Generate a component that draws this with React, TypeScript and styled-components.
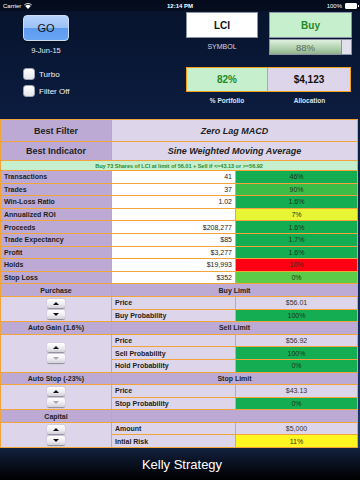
import React from 'react';
import styled, { createGlobalStyle } from 'styled-components';

const GlobalStyle = createGlobalStyle`
  html, body { margin: 0; padding: 0; }
  body { font-family: "Liberation Sans", Arial, sans-serif; background: #000; }
`;

const ORANGE = '#f2a33a';
const PURPLE = '#bcaad4';
const LAVENDER = '#ddd6ea';
const WHITE = '#ffffff';
const LIGHT_GREEN = '#c6efce';

type Tone = 'green' | 'lime' | 'yellowGreen' | 'red' | 'soft' | 'yellow';

const toneColors: Record<Tone, string> = {
  green: '#14ad52',
  lime: '#3cbd48',
  yellowGreen: '#e7f534',
  red: '#ff0012',
  soft: '#5bcb48',
  yellow: '#fff521',
};

interface Stat {
  label: string;
  value: string;
  pct: string;
  tone: Tone;
}

const stats: Stat[] = [
  { label: 'Transactions', value: '41', pct: '46%', tone: 'green' },
  { label: 'Trades', value: '37', pct: '90%', tone: 'lime' },
  { label: 'Win-Loss Ratio', value: '1.02', pct: '1.6%', tone: 'green' },
  { label: 'Annualized ROI', value: '', pct: '7%', tone: 'yellowGreen' },
  { label: 'Proceeds', value: '$208,277', pct: '1.6%', tone: 'green' },
  { label: 'Trade Expectancy', value: '$85', pct: '1.7%', tone: 'green' },
  { label: 'Profit', value: '$3,277', pct: '1.6%', tone: 'green' },
  { label: 'Holds', value: '$19,993', pct: '10%', tone: 'red' },
  { label: 'Stop Loss', value: '$352', pct: '0%', tone: 'soft' },
];

interface SubRow {
  label: string;
  value: string;
  tone?: Tone;
}

interface Section {
  title: string;
  limit: string;
  downEnabled: boolean;
  rows: SubRow[];
}

const sections: Section[] = [
  {
    title: 'Purchase',
    limit: 'Buy Limit',
    downEnabled: true,
    rows: [
      { label: 'Price', value: '$56.01' },
      { label: 'Buy Probability', value: '100%', tone: 'green' },
    ],
  },
  {
    title: 'Auto Gain (1.6%)',
    limit: 'Sell Limit',
    downEnabled: false,
    rows: [
      { label: 'Price', value: '$56.92' },
      { label: 'Sell Probability', value: '100%', tone: 'green' },
      { label: 'Hold Probability', value: '0%', tone: 'green' },
    ],
  },
  {
    title: 'Auto Stop (-23%)',
    limit: 'Stop Limit',
    downEnabled: false,
    rows: [
      { label: 'Price', value: '$43.13' },
      { label: 'Stop Probability', value: '0%', tone: 'green' },
    ],
  },
  {
    title: 'Capital',
    limit: '',
    downEnabled: true,
    rows: [
      { label: 'Amount', value: '$5,000' },
      { label: 'Intial Risk', value: '11%', tone: 'yellow' },
    ],
  },
];

const App = () => (
  <>
    <GlobalStyle />
    <Screen>
      <StatusBar>
        <Carrier>
          Carrier
          <svg width="8" height="6" viewBox="0 0 8 6">
            <path d="M4 6 L1.2 3 A4 4 0 0 1 6.8 3 Z" fill="#fff" />
            <path d="M0.2 2 A5.5 5.5 0 0 1 7.8 2" stroke="#fff" strokeWidth="0.8" fill="none" />
          </svg>
        </Carrier>
        <Clock>12:14 PM</Clock>
        <Battery>
          100%
          <BatteryIcon />
        </Battery>
      </StatusBar>

      <Header>
        <Controls>
          <GoButton>GO</GoButton>
          <DateText>9-Jun-15</DateText>
          <Toggles>
            <Toggle>
              <CheckBox />
              Turbo
            </Toggle>
            <Toggle>
              <CheckBox />
              Filter Off
            </Toggle>
          </Toggles>
        </Controls>

        <Summary>
          <SymbolRow>
            <SymbolColumn>
              <SymbolBox>LCI</SymbolBox>
              <Caption>SYMBOL</Caption>
            </SymbolColumn>
            <SignalColumn>
              <SignalBox>Buy</SignalBox>
              <Confidence>
                <ConfidenceFill>88%</ConfidenceFill>
                <ConfidenceKnob />
              </Confidence>
            </SignalColumn>
          </SymbolRow>
          <AllocRow>
            <AllocColumn>
              <AllocBox $bg={LIGHT_GREEN} $color="#1f8a26">82%</AllocBox>
              <SmallCaption>% Portfolio</SmallCaption>
            </AllocColumn>
            <AllocColumn>
              <AllocBox $bg={LAVENDER} $color="#111" $joined>
                $4,123
              </AllocBox>
              <SmallCaption>Allocation</SmallCaption>
            </AllocColumn>
          </AllocRow>
        </Summary>
      </Header>

      <Table>
        <Cell $bg={PURPLE} $align="center" $size={9} $bold>
          Best Filter
        </Cell>
        <Cell $bg={LAVENDER} $align="center" $size={9} $bold $italic $span={2}>
          Zero Lag MACD
        </Cell>
        <Cell $bg={PURPLE} $align="center" $size={9} $bold>
          Best Indicator
        </Cell>
        <Cell $bg={LAVENDER} $align="center" $size={9} $bold $italic $span={2}>
          Sine Weighted Moving Average
        </Cell>
        <Banner>Buy 73 Shares of LCI at limit of 56.01 + Sell if &lt;=43.13 or &gt;=56.92</Banner>

        {stats.map((s) => (
          <React.Fragment key={s.label}>
            <Cell $bg={PURPLE} $bold>
              {s.label}
            </Cell>
            <Cell $bg={WHITE} $align="right">
              {s.value}
            </Cell>
            <Cell $bg={toneColors[s.tone]} $align="center" $color="#1e3320">
              {s.pct}
            </Cell>
          </React.Fragment>
        ))}

        {sections.map((sec) => (
          <React.Fragment key={sec.title}>
            <Cell $bg={PURPLE} $align="center" $bold>
              {sec.title}
            </Cell>
            <Cell $bg={PURPLE} $align="center" $bold $span={2}>
              {sec.limit}
            </Cell>
            <StepperCell $rows={sec.rows.length}>
              <StepButton>
                <Arrow $up />
              </StepButton>
              <StepButton>
                <Arrow $disabled={!sec.downEnabled} />
              </StepButton>
            </StepperCell>
            {sec.rows.map((r) => (
              <React.Fragment key={r.label}>
                <Cell $bg={LAVENDER} $bold>
                  {r.label}
                </Cell>
                <Cell
                  $bg={r.tone ? toneColors[r.tone] : LAVENDER}
                  $align="center"
                  $color={r.tone ? '#1e3320' : '#333'}
                >
                  {r.value}
                </Cell>
              </React.Fragment>
            ))}
          </React.Fragment>
        ))}
      </Table>

      <Footer>Kelly Strategy</Footer>
    </Screen>
  </>
);

export default App;

const Screen = styled.div`
  width: 360px;
  height: 480px;
  overflow: hidden;
  display: flex;
  flex-direction: column;
  background: linear-gradient(180deg, #07132c 0%, #12295a 60%, #1c3b6f 100%);
`;

const StatusBar = styled.div`
  height: 11px;
  display: flex;
  align-items: center;
  justify-content: space-between;
  padding: 0 3px;
  color: #fff;
  font-size: 6px;
  background: rgba(0, 0, 0, 0.35);
`;

const Carrier = styled.div`
  display: flex;
  align-items: center;
  gap: 3px;
  width: 60px;
`;

const Clock = styled.div`
  font-weight: bold;
`;

const Battery = styled.div`
  display: flex;
  align-items: center;
  justify-content: flex-end;
  gap: 3px;
  width: 60px;
`;

const BatteryIcon = styled.span`
  width: 10px;
  height: 4px;
  background: #fff;
  border: 1px solid #fff;
  border-radius: 1px;
  position: relative;
  &::after {
    content: '';
    position: absolute;
    right: -3px;
    top: 1px;
    width: 1px;
    height: 2px;
    background: #fff;
  }
`;

const Header = styled.div`
  height: 108px;
  display: flex;
`;

const Controls = styled.div`
  width: 163px;
  padding-left: 23px;
  padding-top: 4px;
  display: flex;
  flex-direction: column;
`;

const GoButton = styled.div`
  width: 44px;
  height: 24px;
  border: 1px solid #cfdcf0;
  border-radius: 4px;
  display: flex;
  align-items: center;
  justify-content: center;
  font-size: 11px;
  color: #111;
  background: linear-gradient(180deg, #b6d2fb 0%, #9cc1f6 48%, #5d9bf0 52%, #6aa5f3 100%);
  box-shadow: 0 1px 2px rgba(0, 0, 0, 0.5);
`;

const DateText = styled.div`
  width: 46px;
  text-align: center;
  margin-top: 5px;
  font-size: 7.5px;
  color: #e6e9f0;
`;

const Toggles = styled.div`
  margin-top: 13px;
  display: flex;
  flex-direction: column;
  gap: 5px;
`;

const Toggle = styled.div`
  display: flex;
  align-items: center;
  gap: 4px;
  font-size: 8px;
  color: #f2f4f8;
`;

const CheckBox = styled.span`
  width: 10px;
  height: 10px;
  border-radius: 3px;
  border: 1px solid #9aa3b3;
  background: linear-gradient(180deg, #ffffff 0%, #e4e6ea 100%);
`;

const Summary = styled.div`
  padding-top: 1px;
  display: flex;
  flex-direction: column;
  gap: 12px;
`;

const SymbolRow = styled.div`
  display: flex;
  gap: 11px;
`;

const SymbolColumn = styled.div`
  display: flex;
  flex-direction: column;
  align-items: center;
  gap: 5px;
`;

const SymbolBox = styled.div`
  width: 70px;
  height: 24px;
  background: #fff;
  border: 1px solid #8a93a6;
  display: flex;
  align-items: center;
  justify-content: center;
  font-weight: bold;
  font-size: 10px;
  color: #111;
`;

const Caption = styled.div`
  font-size: 7px;
  color: #cfd6e4;
`;

const SignalColumn = styled.div`
  display: flex;
  flex-direction: column;
  width: 83px;
`;

const SignalBox = styled.div`
  height: 24px;
  background: ${LIGHT_GREEN};
  border: 1px solid #8a93a6;
  display: flex;
  align-items: center;
  justify-content: center;
  font-weight: bold;
  font-size: 10px;
  color: #1f8a26;
`;

const Confidence = styled.div`
  height: 14px;
  margin-top: 1px;
  display: flex;
  border: 1px solid #8a93a6;
`;

const ConfidenceFill = styled.div`
  flex: 1;
  display: flex;
  align-items: center;
  justify-content: center;
  font-size: 9.5px;
  color: #5b6a5c;
  background: linear-gradient(180deg, #dff0de 0%, #b3d3b1 55%, #8fb28d 100%);
`;

const ConfidenceKnob = styled.div`
  width: 9px;
  background: #e3e0ee;
  border-left: 1px solid #8a93a6;
`;

const AllocRow = styled.div`
  display: flex;
`;

const AllocColumn = styled.div`
  display: flex;
  flex-direction: column;
  align-items: center;
  gap: 5px;
`;

const AllocBox = styled.div<{ $bg: string; $color: string; $joined?: boolean }>`
  width: ${({ $joined }) => ($joined ? '82px' : '80px')};
  height: 23px;
  background: ${({ $bg }) => $bg};
  border: 1px solid #f0a21e;
  border-left-width: ${({ $joined }) => ($joined ? '0' : '1px')};
  display: flex;
  align-items: center;
  justify-content: center;
  font-weight: bold;
  font-size: 10px;
  color: ${({ $color }) => $color};
`;

const SmallCaption = styled.div`
  font-size: 6.5px;
  font-weight: bold;
  color: #dde3ee;
`;

const Table = styled.div`
  width: 356px;
  border: 1px solid ${ORANGE};
  background: ${ORANGE};
  display: grid;
  grid-template-columns: 110px 123px 1fr;
  grid-template-rows: 21px 18px 9px;
  grid-auto-rows: 11.6px;
  gap: 1px;
`;

const Cell = styled.div<{
  $bg: string;
  $align?: 'left' | 'center' | 'right';
  $bold?: boolean;
  $italic?: boolean;
  $size?: number;
  $span?: number;
  $color?: string;
}>`
  grid-column: span ${({ $span }) => $span ?? 1};
  background: ${({ $bg }) => $bg};
  display: flex;
  align-items: center;
  justify-content: ${({ $align }) =>
    $align === 'center' ? 'center' : $align === 'right' ? 'flex-end' : 'flex-start'};
  padding: 0 3px;
  font-size: ${({ $size }) => $size ?? 7}px;
  font-weight: ${({ $bold }) => ($bold ? 'bold' : 'normal')};
  font-style: ${({ $italic }) => ($italic ? 'italic' : 'normal')};
  color: ${({ $color }) => $color ?? '#222'};
  white-space: nowrap;
  overflow: hidden;
`;

const Banner = styled.div`
  grid-column: span 3;
  background: ${LIGHT_GREEN};
  display: flex;
  align-items: center;
  justify-content: center;
  font-size: 5.5px;
  font-weight: bold;
  color: #2a8a2a;
  white-space: nowrap;
`;

const StepperCell = styled.div<{ $rows: number }>`
  grid-row: span ${({ $rows }) => $rows};
  background: ${LAVENDER};
  display: flex;
  flex-direction: column;
  align-items: center;
  justify-content: center;
  gap: 2px;
`;

const StepButton = styled.div`
  width: 18px;
  height: 9px;
  border-radius: 2px;
  background: linear-gradient(180deg, #ffffff 0%, #eceaf0 60%, #d2d0d8 100%);
  box-shadow: 0 0.5px 1px rgba(0, 0, 0, 0.35);
  display: flex;
  align-items: center;
  justify-content: center;
`;

const Arrow = styled.span<{ $up?: boolean; $disabled?: boolean }>`
  width: 0;
  height: 0;
  border-left: 3px solid transparent;
  border-right: 3px solid transparent;
  ${({ $up, $disabled }) => {
    const c = $disabled ? '#a9a9b2' : '#111';
    return $up ? `border-bottom: 3.5px solid ${c};` : `border-top: 3.5px solid ${c};`;
  }}
`;

const Footer = styled.div`
  flex: 1;
  display: flex;
  align-items: center;
  justify-content: center;
  padding-left: 4px;
  font-size: 13px;
  color: #fff;
  background: linear-gradient(180deg, #13223f 0%, #070c18 60%, #000 100%);
`;
